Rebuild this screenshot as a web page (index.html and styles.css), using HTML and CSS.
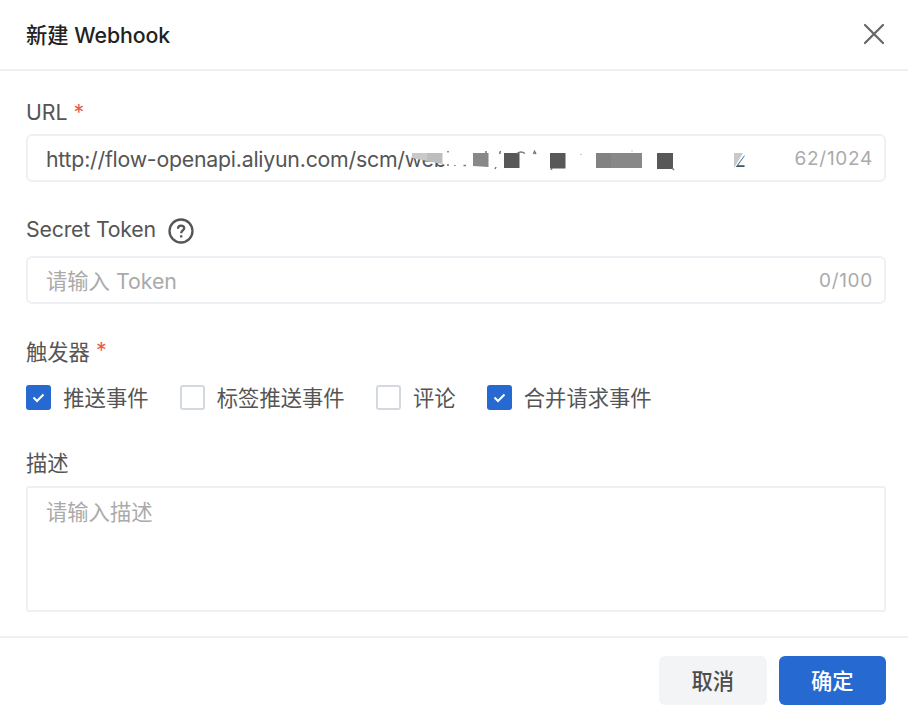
FILE: index.html
```html
<!DOCTYPE html>
<html lang="zh-CN">

<head>
    <meta charset="UTF-8" />
    <title>新建 Webhook</title>
    <link rel="stylesheet" href="styles.css">
</head>

<body>
    <div class="dialog">
        <div class="header">
            <div class="title">新建 <span class="titleLatin">Webhook</span></div>
            <svg class="close" viewBox="0 0 22 22">
                <path d="M2 2 L20 20 M20 2 L2 20" />
            </svg>
        </div>

        <div class="content">
            <div class="label">URL <span class="required">*</span></div>
            <div class="input">
                <span class="value">http://flow-openapi.aliyun.com/scm/web</span>
                <span class="value lastLetter">z</span>
                <svg class="mask" viewBox="404 134 350 48">
                    <path fill="#fff" d="M412 146 H450 V168 L443 164 L412 157 Z M731 146 H746 V153 L735 168 H731 Z" />
                    <path fill="#c9c9c9" d="M412 153 H427 V161 L412 158 Z M734 153 H743 L734 168 Z" />
                    <path fill="#bdbdbd" d="M427 153 H442.500 V164 L427 161 Z" />
                    <path fill="#888" d="M473 153 H488.500 V167 L473 166 Z M596 153 H642 V168 H596 Z" />
                    <path fill="#828282" d="M596 153 H611 V168 H596 Z" />
                    <path fill="#585858" d="M504 153 H519.500 V168 H504 Z M550 153 H565.500 V168.500 H550 Z M657 153 H673 V169 H657 Z" />
                    <path class="trace" d="M448 151 V152.500 M448 164 V166 M455 165 V166 M463.500 165.500 H466 M486 151 V153 M496 167 L495 169 M500.500 151 L499.500 154 M517 153.500 Q521 150.500 525 153.500 M533.500 154 L534.500 151.500 L536 154 M551.500 168 V170 M672 168 L674 170" />
                    <path class="dot" d="M581 154 V155 M632 150.500 V151.500" />
                </svg>
                <span class="count">62/1024</span>
            </div>

            <div class="label labelToken">
                <span class="labelText">Secret Token</span>
                <svg class="help" viewBox="0 0 26 26">
                    <circle cx="13" cy="13" r="11.500" />
                    <path d="M10 10.700 C10 6.500 16.200 6.700 16.200 10.300 C16.200 12.500 13.200 12.500 13.200 15.200 M13.200 17.200 V19.400" />
                </svg>
            </div>
            <div class="input">
                <span class="placeholder">请输入 Token</span>
                <span class="count">0/100</span>
            </div>

            <div class="label labelTrigger">触发器 <span class="required">*</span></div>
            <div class="checks">
                <div class="check">
                    <svg class="box checked" viewBox="0 0 25 25"><path d="M7.500 12.500 L11 16 L17.500 9.500" /></svg>
                    <span class="checkText">推送事件</span>
                </div>
                <div class="check">
                    <div class="box"></div>
                    <span class="checkText">标签推送事件</span>
                </div>
                <div class="check">
                    <div class="box"></div>
                    <span class="checkText">评论</span>
                </div>
                <div class="check">
                    <svg class="box checked" viewBox="0 0 25 25"><path d="M7.500 12.500 L11 16 L17.500 9.500" /></svg>
                    <span class="checkText">合并请求事件</span>
                </div>
            </div>

            <div class="label labelDesc">描述</div>
            <div class="textarea"><span class="placeholder">请输入描述</span></div>
        </div>

        <div class="footer">
            <div class="button">取消</div>
            <div class="button primary">确定</div>
        </div>
    </div>
</body>

</html>
```
FILE: styles.css
```css
* {
    box-sizing: border-box;
}

body {
    margin: 0;
    background-color: white;
    color: #555;
    font-family: Inter, "Noto Sans CJK SC", sans-serif;
    font-size: 21.3px;
    font-weight: 400;
}

.dialog {
    height: 726px;
    display: flex;
    flex-direction: column;
    overflow: hidden;
}

.header {
    height: 71px;
    padding: 0 23px 2px 26px;
    border-bottom: 2px solid #edf0f4;
    display: flex;
    justify-content: space-between;
    align-items: center;
}

.title {
    color: #222;
    font-weight: 500;
}

.titleLatin {
    letter-spacing: -0.1px;
}

.close {
    width: 22px;
    height: 22px;
    fill: none;
    stroke: #666;
    stroke-width: 2.2;
    stroke-linecap: round;
}

.content {
    height: 565px;
    padding: 25px 22px 0 26px;
}

.label {
    height: 32px;
    margin-bottom: 6px;
    padding-bottom: 1px;
    display: flex;
    align-items: center;
    white-space: pre;
}

.labelToken {
    margin-top: 32px;
    margin-bottom: 10px;
    white-space: normal;
}

.labelText {
    padding-bottom: 2px;
    letter-spacing: -0.2px;
}

.labelTrigger {
    margin-top: 30px;
    margin-bottom: 19px;
    padding-bottom: 0;
}

.labelDesc {
    margin-top: 35px;
    margin-bottom: 9px;
    padding-bottom: 0;
}

.required {
    color: #e5604c;
}

.help {
    width: 26px;
    height: 26px;
    margin: 3px 0 0 12px;
    fill: none;
    stroke: #555;
    stroke-width: 2.3;
}

.input {
    position: relative;
    height: 48px;
    padding: 0 11px 0 18px;
    border: 2px solid #edf0f4;
    border-radius: 6px;
    display: flex;
    align-items: center;
}

.value {
    padding-top: 1px;
    letter-spacing: -0.23px;
}

.placeholder {
    padding-bottom: 1px;
    color: #aaa;
}

.count {
    margin-left: auto;
    padding-top: 1px;
    color: #aaa;
    font-size: 19px;
    letter-spacing: 0.7px;
}

/* covers the private part of the hook address */
.mask {
    position: absolute;
    left: 376px;
    top: -2px;
    width: 350px;
    height: 48px;
}

.lastLetter {
    position: absolute;
    left: 706px;
}

.trace,
.dot {
    fill: none;
    stroke: #777;
    stroke-width: 1.5;
}

.dot {
    stroke: #bbb;
}

.checks {
    height: 25px;
    display: flex;
    align-items: center;
    gap: 31px;
}

.check {
    display: flex;
    align-items: center;
    gap: 12.3px;
}

.checkText {
    padding-bottom: 2px;
}

.box {
    width: 25px;
    height: 25px;
    border: 2px solid #d3d9df;
    border-radius: 3px;
}

.checked {
    border: none;
    background-color: #266ad1;
    fill: none;
    stroke: white;
    stroke-width: 2;
}

.textarea {
    height: 126px;
    padding: 7px 18px;
    border: 2px solid #edf0f4;
    border-radius: 3px;
}

.footer {
    height: 90px;
    padding: 18px 22px 0 0;
    border-top: 2px solid #edf0f4;
    display: flex;
    justify-content: flex-end;
    gap: 12px;
}

.button {
    width: 107.5px;
    height: 49px;
    padding-bottom: 2px;
    border-radius: 6px;
    background-color: #f3f4f6;
    color: #4d4d4d;
    font-weight: 500;
    display: flex;
    justify-content: center;
    align-items: center;
}

.primary {
    background-color: #266ad1;
    color: white;
}
```
